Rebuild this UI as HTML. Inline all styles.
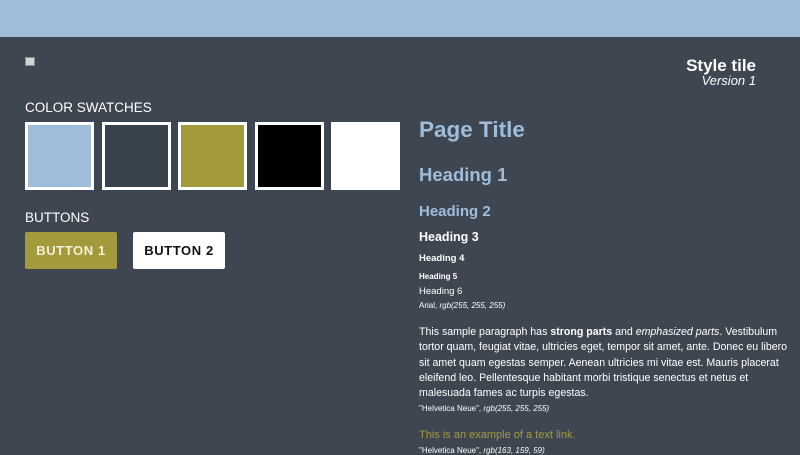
<!DOCTYPE html>
<html><head><style>
*{margin:0;padding:0;box-sizing:border-box}
body{width:800px;height:450px;overflow:hidden;background:#3e4751;font-family:"Liberation Sans",Arial,sans-serif;color:#fff;position:relative}
.a{position:absolute;white-space:nowrap}
.top{position:absolute;left:0;top:0;width:800px;height:37px;background:#9fbcd9}
.sw{position:absolute;top:122px;width:69px;height:68px;border:3px solid #fff}
.btn{position:absolute;top:232px;height:37px;width:92px;font-weight:bold;font-size:13px;letter-spacing:0.6px;text-align:center;line-height:37px;border-radius:2px}
.h{color:#9fbcd9;font-weight:bold}
.cap{font-size:8px;font-style:normal}
</style></head><body>
<div class="top"></div>
<div class="a" style="left:25px;top:57px;width:10px;height:9px;background:#cfd6cc;border:1px solid #889"></div>
<div class="a" style="right:44px;top:56px;font-size:17px;font-weight:bold">Style tile</div>
<div class="a" style="right:44px;top:73px;font-size:13px;font-style:italic">Version 1</div>
<div class="a" style="left:25px;top:100px;font-size:13.5px">COLOR SWATCHES</div>
<div class="sw" style="left:25px;background:#9fbcd9"></div>
<div class="sw" style="left:102px;background:#38424b"></div>
<div class="sw" style="left:178px;background:#a39a3b"></div>
<div class="sw" style="left:255px;background:#000"></div>
<div class="sw" style="left:331px;background:#fff"></div>
<div class="a" style="left:25px;top:210px;font-size:13.5px">BUTTONS</div>
<div class="btn" style="left:25px;background:#a39a3b;color:#f4f0d8">BUTTON 1</div>
<div class="btn" style="left:133px;background:#fff;color:#111">BUTTON 2</div>
<div class="a h" style="left:419px;top:117px;font-size:22.5px">Page Title</div>
<div class="a h" style="left:419px;top:164px;font-size:18.5px">Heading 1</div>
<div class="a h" style="left:419px;top:203px;font-size:15px">Heading 2</div>
<div class="a" style="left:419px;top:230px;font-size:12.5px;font-weight:bold">Heading 3</div>
<div class="a" style="left:419px;top:253px;font-size:9.5px;font-weight:bold">Heading 4</div>
<div class="a" style="left:419px;top:272px;font-size:8px;font-weight:bold">Heading 5</div>
<div class="a" style="left:419px;top:286px;font-size:9.5px">Heading 6</div>
<div class="a cap" style="left:419px;top:301px">Arial, <i>rgb(255, 255, 255)</i></div>
<div class="a" style="left:419px;top:325px;font-size:10.6px;line-height:15.3px;white-space:normal;width:372px">This sample paragraph has <b>strong parts</b> and <i>emphasized parts</i>. Vestibulum tortor quam, feugiat vitae, ultricies eget, tempor sit amet, ante. Donec eu libero sit amet quam egestas semper. Aenean ultricies mi vitae est. Mauris placerat eleifend leo. Pellentesque habitant morbi tristique senectus et netus et malesuada fames ac turpis egestas.</div>
<div class="a cap" style="left:419px;top:404px">"Helvetica Neue", <i>rgb(255, 255, 255)</i></div>
<div class="a" style="left:419px;top:429px;font-size:11px;color:#a39a3b">This is an example of a text link.</div>
<div class="a cap" style="left:419px;top:446px">"Helvetica Neue", <i>rgb(163, 159, 59)</i></div>
</body></html>
